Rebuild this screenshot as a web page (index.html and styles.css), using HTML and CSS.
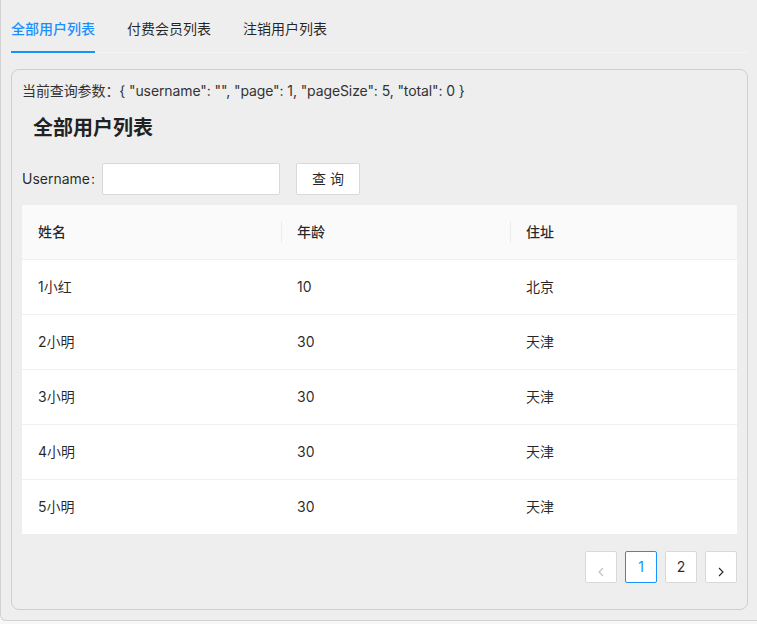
FILE: index.html
```html
<!DOCTYPE html>
<html lang="zh-CN">
<head>
<meta charset="utf-8">
<title>用户列表</title>
<link rel="stylesheet" href="styles.css">
</head>
<body>
<div class="frame">
  <div class="tabs">
    <div class="tab active">全部用户列表</div>
    <div class="tab">付费会员列表</div>
    <div class="tab">注销用户列表</div>
  </div>
  <div class="card">
    <div class="params">当前查询参数：{ "username": "", "page": 1, "pageSize": 5, "total": 0 }</div>
    <h2 class="title">全部用户列表</h2>
    <div class="form">
      <label class="label">Username<span class="colon">:</span></label>
      <input class="input" type="text">
      <button class="btn">查 询</button>
    </div>
    <table class="table">
      <colgroup>
        <col class="c1"><col class="c2"><col class="c3">
      </colgroup>
      <thead>
        <tr><th>姓名</th><th class="sep">年龄</th><th class="sep">住址</th></tr>
      </thead>
      <tbody>
        <tr><td>1小红</td><td>10</td><td>北京</td></tr>
        <tr><td>2小明</td><td>30</td><td>天津</td></tr>
        <tr><td>3小明</td><td>30</td><td>天津</td></tr>
        <tr><td>4小明</td><td>30</td><td>天津</td></tr>
        <tr><td>5小明</td><td>30</td><td>天津</td></tr>
      </tbody>
    </table>
    <div class="pager">
      <div class="pg disabled"><svg width="8" height="10" viewBox="0 0 8 10"><path d="M6 1 L2 5 L6 9" fill="none" stroke="currentColor" stroke-width="1.1"/></svg></div>
      <div class="pg current">1</div>
      <div class="pg">2</div>
      <div class="pg"><svg width="8" height="10" viewBox="0 0 8 10"><path d="M2 1 L6 5 L2 9" fill="none" stroke="currentColor" stroke-width="1.1"/></svg></div>
    </div>
  </div>
</div>
</body>
</html>
```
FILE: styles.css
```css
* { box-sizing: border-box; }
html, body { margin: 0; padding: 0; background: #f7f7f7; }
body {
  font-family: Inter, "Noto Sans CJK SC", sans-serif;
  font-size: 14px;
  line-height: 22px;
  color: rgba(0,0,0,0.85);
}
.frame {
  width: 757px;
  background: #eeeeee;
  border-left: 1px solid #d2d2d2;
  border-bottom: 1px solid #d2d2d2;
  border-bottom-left-radius: 6px;
  padding: 6px 9px 10px 10px;
}
.tabs {
  display: flex;
  gap: 32px;
  border-bottom: 1px solid #f4f4f4;
  margin-bottom: 16px;
}
.tab {
  padding: 12px 0;
  color: rgba(0,0,0,0.85);
  position: relative;
}
.tab.active { color: #1890ff; font-weight: 500; }
.tab.active::after {
  content: "";
  position: absolute;
  left: 0; right: 0; bottom: -1px;
  height: 2px;
  background: #1890ff;
}
.card {
  border: 1px solid #cfcfcf;
  border-radius: 8px;
  padding: 10px 10px 10px 10px;
}
.params { color: #333; letter-spacing: -0.1px; }
.title {
  margin: 12px 0 0 0;
  padding-left: 11px;
  font-size: 20px;
  line-height: 28px;
  font-weight: 600;
  color: #222;
}
.form {
  display: flex;
  align-items: center;
  margin-top: 21px;
  margin-bottom: 10px;
}
.label { color: rgba(0,0,0,0.85); }
.colon { margin: 0 7px 0 1px; }
.input {
  width: 178px;
  height: 32px;
  border: 1px solid #d9d9d9;
  border-radius: 2px;
  background: #fff;
  margin: 0 16px 0 0;
  font: inherit;
}
.btn {
  height: 32px;
  width: 64px;
  border: 1px solid #d9d9d9;
  border-radius: 2px;
  background: #fff;
  font: inherit;
  color: rgba(0,0,0,0.85);
  padding: 0;
}
.table {
  width: 100%;
  border-collapse: collapse;
  table-layout: fixed;
  background: #fff;
}
.c1 { width: 259px; }
.c2 { width: 229px; }
.c3 { width: 227px; }
th, td {
  text-align: left;
  padding: 16px;
  border-bottom: 1px solid #f0f0f0;
  font-weight: 500;
}
td { font-weight: 400; }
th {
  background: #fafafa;
  position: relative;
}
th.sep::before {
  content: "";
  position: absolute;
  left: 0;
  top: 50%;
  width: 1px;
  height: 22px;
  margin-top: -11px;
  background: #ececec;
}
tbody tr:last-child td { border-bottom: none; }
.pager {
  display: flex;
  justify-content: flex-end;
  gap: 8px;
  margin-top: 17px;
  margin-bottom: 16px;
}
.pg {
  width: 32px;
  height: 32px;
  border: 1px solid #d9d9d9;
  border-radius: 2px;
  background: #fff;
  display: flex;
  align-items: center;
  justify-content: center;
  color: rgba(0,0,0,0.85);
  line-height: 30px;
}
.pg svg { margin-top: 9px; }
.pg.disabled { color: rgba(0,0,0,0.25); }
.pg.current { border-color: #1890ff; color: #1890ff; }
```
